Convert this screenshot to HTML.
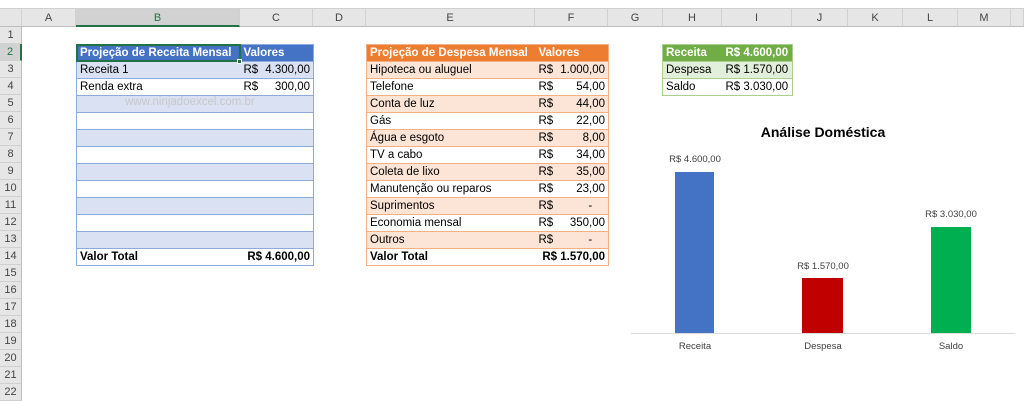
<!DOCTYPE html>
<html><head><meta charset="utf-8"><style>
*{margin:0;padding:0;box-sizing:border-box}
body{width:1024px;height:400px;overflow:hidden;background:#fff;font-family:"Liberation Sans",Arial,sans-serif;font-size:11.5px;color:#000;position:relative}
.ab{position:absolute}
.ch{position:absolute;top:9px;height:18px;background:#e6e6e6;border-right:1px solid #d0d0d0;border-bottom:1px solid #bdbdbd;text-align:center;line-height:18px;font-size:11px;color:#444}
.rh{position:absolute;left:0;width:22px;height:17px;background:#e6e6e6;border-bottom:1px solid #d0d0d0;border-right:1px solid #bdbdbd;text-align:center;line-height:17px;font-size:11px;color:#444}
table{position:absolute;border-collapse:collapse;table-layout:fixed}
td{height:17px;padding:0 3px;white-space:nowrap;overflow:hidden;line-height:16px}
.b{border:1px solid #8ea9db}
.b td{border-top:1px solid #8ea9db;border-bottom:1px solid #8ea9db}
.b tr:nth-child(even) td{background:#d9e1f2}
.b tr.h td{background:#4472c4;color:#fff;font-weight:bold}
.o{border:1px solid #f4b084}
.o td{border-top:1px solid #f4b084;border-bottom:1px solid #f4b084}
.o tr:nth-child(even) td{background:#fce4d6}
.o tr.h td{background:#ed7d31;color:#fff;font-weight:bold}
.g{border:1px solid #a9d08e}
.g td{border-top:1px solid #a9d08e;border-bottom:1px solid #a9d08e}
.g tr.h td{background:#70ad47;color:#fff;font-weight:bold}
.g tr.l td{background:#e2efda}
.r{text-align:right}
.t td{font-weight:bold;background:#fff!important}
.cur{display:flex;justify-content:space-between}
</style></head><body>
<div class="ab" style="left:0;top:0;width:1024px;height:9px;background:#fff;border-bottom:1px solid #d0d0d0"></div>
<div class="ch" style="left:0;width:22px"></div>
<div class="ch" style="left:22px;width:54px">A</div>
<div class="ch" style="left:76px;width:164px;background:#d2d2d2;color:#217346;border-bottom:2px solid #217346">B</div>
<div class="ch" style="left:240px;width:73px">C</div>
<div class="ch" style="left:313px;width:53px">D</div>
<div class="ch" style="left:366px;width:169px">E</div>
<div class="ch" style="left:535px;width:73px">F</div>
<div class="ch" style="left:608px;width:55px">G</div>
<div class="ch" style="left:663px;width:59px">H</div>
<div class="ch" style="left:722px;width:70px">I</div>
<div class="ch" style="left:792px;width:56px">J</div>
<div class="ch" style="left:848px;width:55px">K</div>
<div class="ch" style="left:903px;width:55px">L</div>
<div class="ch" style="left:958px;width:53px">M</div>
<div class="ch" style="left:1011px;width:13px"></div>

<div class="rh" style="top:27px">1</div>
<div class="rh" style="top:44px;background:#d2d2d2;color:#217346;border-right:2px solid #217346">2</div>
<div class="rh" style="top:61px">3</div>
<div class="rh" style="top:78px">4</div>
<div class="rh" style="top:95px">5</div>
<div class="rh" style="top:112px">6</div>
<div class="rh" style="top:129px">7</div>
<div class="rh" style="top:146px">8</div>
<div class="rh" style="top:163px">9</div>
<div class="rh" style="top:180px">10</div>
<div class="rh" style="top:197px">11</div>
<div class="rh" style="top:214px">12</div>
<div class="rh" style="top:231px">13</div>
<div class="rh" style="top:248px">14</div>
<div class="rh" style="top:265px">15</div>
<div class="rh" style="top:282px">16</div>
<div class="rh" style="top:299px">17</div>
<div class="rh" style="top:316px">18</div>
<div class="rh" style="top:333px">19</div>
<div class="rh" style="top:350px">20</div>
<div class="rh" style="top:367px">21</div>
<div class="rh" style="top:384px">22</div>

<table class="b" style="left:76px;top:44px;width:237px">
<col style="width:164px"><col style="width:73px">
<tr class="h"><td>Projeção de Receita Mensal</td><td>Valores</td></tr>
<tr><td>Receita 1</td><td><span class="cur"><span>R$</span><span>4.300,00</span></span></td></tr>
<tr><td>Renda extra</td><td><span class="cur"><span>R$</span><span>300,00</span></span></td></tr>
<tr><td></td><td></td></tr>
<tr><td></td><td></td></tr>
<tr><td></td><td></td></tr>
<tr><td></td><td></td></tr>
<tr><td></td><td></td></tr>
<tr><td></td><td></td></tr>
<tr><td></td><td></td></tr>
<tr><td></td><td></td></tr>
<tr><td></td><td></td></tr>
<tr class="t"><td>Valor Total</td><td class="r">R$ 4.600,00</td></tr>
</table>
<div class="ab" style="left:76px;top:44px;width:165px;height:18px;border:2px solid #217346"></div>
<div class="ab" style="left:237px;top:59px;width:5px;height:5px;background:#217346;border:1px solid #fff"></div>
<div class="ab" style="left:125px;top:96px;font-size:11.5px;color:#c8c8c8">www.ninjadoexcel.com.br</div>

<table class="o" style="left:366px;top:44px;width:242px">
<col style="width:169px"><col style="width:73px">
<tr class="h"><td>Projeção de Despesa Mensal</td><td>Valores</td></tr>
<tr><td>Hipoteca ou aluguel</td><td><span class="cur"><span>R$</span><span>1.000,00</span></span></td></tr>
<tr><td>Telefone</td><td><span class="cur"><span>R$</span><span>54,00</span></span></td></tr>
<tr><td>Conta de luz</td><td><span class="cur"><span>R$</span><span>44,00</span></span></td></tr>
<tr><td>Gás</td><td><span class="cur"><span>R$</span><span>22,00</span></span></td></tr>
<tr><td>Água e esgoto</td><td><span class="cur"><span>R$</span><span>8,00</span></span></td></tr>
<tr><td>TV a cabo</td><td><span class="cur"><span>R$</span><span>34,00</span></span></td></tr>
<tr><td>Coleta de lixo</td><td><span class="cur"><span>R$</span><span>35,00</span></span></td></tr>
<tr><td>Manutenção ou reparos</td><td><span class="cur"><span>R$</span><span>23,00</span></span></td></tr>
<tr><td>Suprimentos</td><td><span class="cur"><span>R$</span><span>-&nbsp;&nbsp;&nbsp;&nbsp;</span></span></td></tr>
<tr><td>Economia mensal</td><td><span class="cur"><span>R$</span><span>350,00</span></span></td></tr>
<tr><td>Outros</td><td><span class="cur"><span>R$</span><span>-&nbsp;&nbsp;&nbsp;&nbsp;</span></span></td></tr>
<tr class="t"><td>Valor Total</td><td class="r">R$ 1.570,00</td></tr>
</table>

<table class="g" style="left:662px;top:44px;width:130px">
<col style="width:60px"><col style="width:70px">
<tr class="h"><td>Receita</td><td>R$ 4.600,00</td></tr>
<tr class="l"><td>Despesa</td><td>R$ 1.570,00</td></tr>
<tr><td>Saldo</td><td>R$ 3.030,00</td></tr>
</table>

<div class="ab" style="left:623px;top:124px;width:400px;text-align:center;font-size:14px;font-weight:bold;color:#000">Análise Doméstica</div>
<div class="ab" style="left:631px;top:333px;width:384px;height:1px;background:#d9d9d9"></div>
<div class="ab" style="left:675px;top:172px;width:39px;height:161px;background:#4472c4"></div>
<div class="ab" style="left:802px;top:278px;width:41px;height:55px;background:#c00000"></div>
<div class="ab" style="left:931px;top:227px;width:40px;height:106px;background:#00b050"></div>
<div class="ab" style="left:654px;top:154px;width:82px;text-align:center;font-size:9.5px;color:#404040">R$ 4.600,00</div>
<div class="ab" style="left:782px;top:261px;width:82px;text-align:center;font-size:9.5px;color:#404040">R$ 1.570,00</div>
<div class="ab" style="left:910px;top:209px;width:82px;text-align:center;font-size:9.5px;color:#404040">R$ 3.030,00</div>
<div class="ab" style="left:654px;top:341px;width:82px;text-align:center;font-size:9.5px;color:#404040">Receita</div>
<div class="ab" style="left:782px;top:341px;width:82px;text-align:center;font-size:9.5px;color:#404040">Despesa</div>
<div class="ab" style="left:910px;top:341px;width:82px;text-align:center;font-size:9.5px;color:#404040">Saldo</div>
</body></html>
